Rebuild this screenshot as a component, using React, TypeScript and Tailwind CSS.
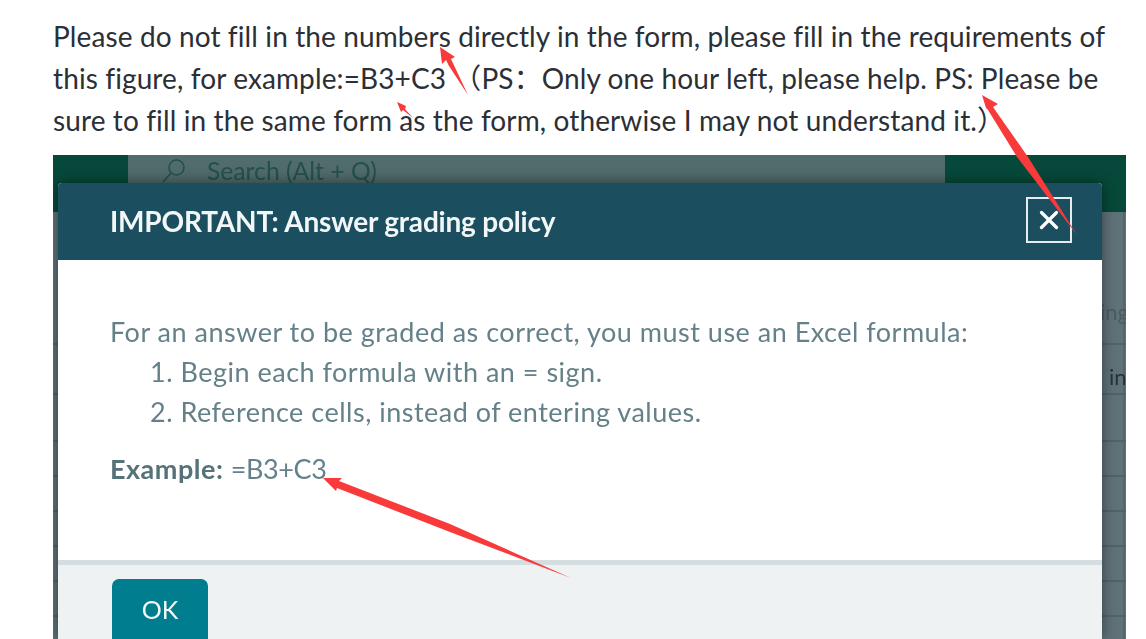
import React from 'react';
import { X } from 'lucide-react';

const gridRows = [133, 50, 47, 35, 35, 35, 35, 35, 35];

const arrows = [
  '440,47 455,57 451,59 468,95 449,66 446,60 442,64',
  '397,102 406,106 405,109 413,118 403,110 401,112',
  '982,95 998,104 993,107 1028,157 1077,235 1017,157 988,110 986,108',
  '323,478 342,478 339,481 450,524 571,578 450,532 337,488 336,491',
];

export default function App() {
  return (
    <div className="h-[639px] w-[1146px] overflow-hidden bg-white relative font-['Lato','Noto_Sans_CJK_SC',sans-serif]">
      <div className="pt-[15px] pl-[53px] pr-[20px]">
        <p className="text-[28px] leading-[42px] tracking-[0.11px] text-[#2b2f36] whitespace-nowrap">
          Please do not fill in the numbers directly in the form, please fill in the requirements of
          <br />
          this figure, for example:=B3+C3 （PS：Only one hour left, please help. PS: Please be
          <br />
          sure to fill in the same form as the form, otherwise I may not understand it.）
        </p>

        {/* Screenshot pasted into the question */}
        <div className="relative mt-[14px] h-[484px] w-[1073px] overflow-hidden bg-[#5f7278]">
          <div className="h-[57px] bg-[#06493a]">
            <div className="ml-[75px] flex h-[57px] w-[817px] items-start gap-[20px] bg-gradient-to-b from-[#506e6c] to-[#4d6466] pl-[33px] text-[#25504a] blur-[0.4px]">
              <svg viewBox="0 0 26 26" className="mt-[3px] h-[26px] w-[26px]" fill="none" stroke="currentColor" strokeWidth="1.6">
                <circle cx="15.5" cy="9.5" r="7.5" />
                <path d="M10 15 L2 24" />
              </svg>
              <span className="text-[24.7px] leading-[32px]">Search (Alt + Q)</span>
            </div>
          </div>
          <div className="flex flex-col">
            {gridRows.map((h, i) => (
              <div key={i} className="flex justify-end border-b-2 border-[#516369]" style={{ height: h }}>
                <div className="h-full w-[3px] border-l-2 border-[#55676d]" />
              </div>
            ))}
          </div>
          <span className="absolute left-[1047px] top-[140px] text-[22px] text-[#4c5c62] blur-[0.5px]">ing</span>
          <span className="absolute left-[1056px] top-[205px] text-[22px] text-[#26323e] blur-[0.5px]">in</span>

          {/* Modal */}
          <div className="absolute left-[5px] top-[28px] flex h-[456px] w-[1044px] flex-col overflow-hidden rounded-t-[4px] bg-white text-[#648189] shadow-[0_0_14px_rgba(0,0,0,0.45)]">
            <div className="flex h-[77px] shrink-0 items-start justify-between bg-[#1b4f5f] pl-[52px] pr-[30px]">
              <h2 className="mt-[19px] text-[28px] font-bold leading-[38px] tracking-[-0.2px] text-[#f2f6f7] blur-[0.4px]">
                IMPORTANT: Answer grading policy
              </h2>
              <button className="mt-[14px] flex h-[46px] w-[46px] items-center justify-center border-2 border-[#e6edef] text-white">
                <X size={30} strokeWidth={2.6} />
              </button>
            </div>

            <div className="h-[300px] shrink-0 pl-[52px] pt-[52px] text-[27px] leading-[40px] tracking-[0.5px] blur-[0.4px]">
              <p>For an answer to be graded as correct, you must use an Excel formula:</p>
              <ol className="pl-[40px]">
                <li>1. Begin each formula with an = sign.</li>
                <li>2. Reference cells, instead of entering values.</li>
              </ol>
              <p className="mt-[17px]">
                <b className="font-bold text-[#557279]">Example:</b> <span className="tracking-[-0.4px]">=B3+C3</span>
              </p>
            </div>

            <div className="flex-1 border-t-[5px] border-[#d4dde0] bg-[#eef2f3] pl-[54px] pt-[14px]">
              <button className="h-[70px] w-[96px] rounded-[7px] bg-[#007e90] pb-[8px] text-[25px] text-[#f2f8f9] blur-[0.3px]">
                OK
              </button>
            </div>
          </div>
        </div>
      </div>

      {/* Red annotation arrows drawn over the picture */}
      <svg className="absolute left-0 top-0" width="1146" height="639" viewBox="0 0 1146 639">
        {arrows.map((points) => (
          <polygon key={points} points={points} fill="#f93a3a" />
        ))}
      </svg>
    </div>
  );
}
